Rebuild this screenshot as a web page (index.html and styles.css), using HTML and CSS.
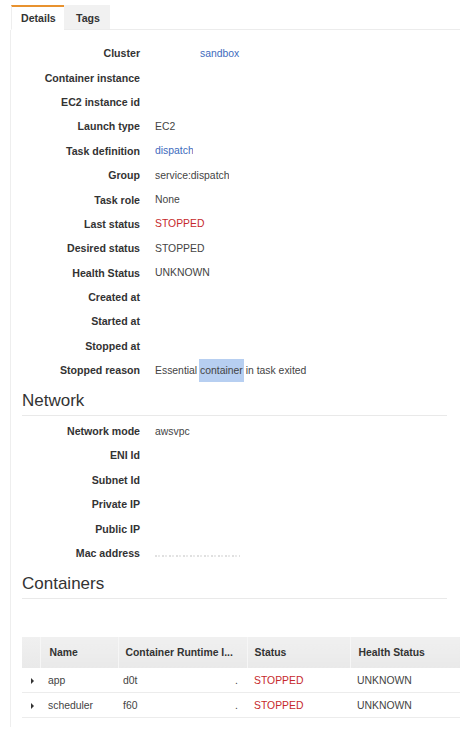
FILE: index.html
```html
<!DOCTYPE html>
<html>
<head>
<meta charset="utf-8">
<link rel="stylesheet" href="styles.css">
</head>
<body>
<div class="tabs">
  <div class="tab active">Details</div>
  <div class="tab">Tags</div>
  <div class="tab-fill"></div>
</div>
<div class="panel">
  <dl class="props">
    <div class="row"><dt>Cluster</dt><dd><span class="link indent">sandbox</span></dd></div>
    <div class="row"><dt>Container instance</dt><dd></dd></div>
    <div class="row"><dt>EC2 instance id</dt><dd></dd></div>
    <div class="row"><dt>Launch type</dt><dd>EC2</dd></div>
    <div class="row"><dt>Task definition</dt><dd><span class="link clip clip-td">dispatch</span></dd></div>
    <div class="row"><dt>Group</dt><dd><span class="clip clip-gr">service:dispatch</span></dd></div>
    <div class="row"><dt>Task role</dt><dd>None</dd></div>
    <div class="row"><dt>Last status</dt><dd class="red">STOPPED</dd></div>
    <div class="row"><dt>Desired status</dt><dd>STOPPED</dd></div>
    <div class="row"><dt>Health Status</dt><dd>UNKNOWN</dd></div>
    <div class="row"><dt>Created at</dt><dd></dd></div>
    <div class="row"><dt>Started at</dt><dd></dd></div>
    <div class="row"><dt>Stopped at</dt><dd></dd></div>
    <div class="row"><dt>Stopped reason</dt><dd>Essential <span class="hl">container</span> in task exited</dd></div>
  </dl>
  <h2 class="section section-net">Network</h2>
  <dl class="props props-net">
    <div class="row"><dt>Network mode</dt><dd>awsvpc</dd></div>
    <div class="row"><dt>ENI Id</dt><dd></dd></div>
    <div class="row"><dt>Subnet Id</dt><dd></dd></div>
    <div class="row"><dt>Private IP</dt><dd></dd></div>
    <div class="row"><dt>Public IP</dt><dd></dd></div>
    <div class="row"><dt>Mac address</dt><dd><span class="blur"></span></dd></div>
  </dl>
  <h2 class="section section-cont">Containers</h2>
  <table class="grid">
    <colgroup>
      <col class="w-exp">
      <col class="w-name">
      <col class="w-rt">
      <col class="w-st">
      <col>
    </colgroup>
    <thead>
      <tr>
        <th class="c-exp"></th>
        <th class="c-name">Name</th>
        <th class="c-rt">Container Runtime I...</th>
        <th class="c-st">Status</th>
        <th class="c-hs">Health Status</th>
      </tr>
    </thead>
    <tbody>
      <tr>
        <td class="c-exp"><span class="tri"></span></td>
        <td class="c-name">app</td>
        <td class="c-rt"><div class="rt"><span>d0t</span><span>.</span></div></td>
        <td class="c-st red">STOPPED</td>
        <td class="c-hs">UNKNOWN</td>
      </tr>
      <tr>
        <td class="c-exp"><span class="tri"></span></td>
        <td class="c-name">scheduler</td>
        <td class="c-rt"><div class="rt"><span>f60</span><span>.</span></div></td>
        <td class="c-st red">STOPPED</td>
        <td class="c-hs">UNKNOWN</td>
      </tr>
    </tbody>
  </table>
</div>
</body>
</html>
```
FILE: styles.css
```css
html, body {
  margin: 0;
  padding: 0;
  background: #ffffff;
}
body {
  font-family: "Liberation Sans", Arial, Helvetica, sans-serif;
  color: #444;
  width: 474px;
  height: 740px;
  overflow: hidden;
}
.tabs {
  display: flex;
  margin-top: 5px;
  padding-left: 11px;
  padding-right: 14px;
  height: 25px;
}
.tab {
  font-size: 10.6px;
  font-weight: bold;
  color: #333;
  line-height: 23px;
  box-sizing: border-box;
  height: 25px;
  border-bottom: 1px solid #ececec;
}
.tab.active {
  width: 53px;
  padding-left: 9px;
  border-top: 2px solid #e8922f;
  border-left: 1px solid #eeeeee;
  border-bottom: 1px solid #ffffff;
  background: #fff;
}
.tab:not(.active) {
  width: 46px;
  padding-left: 12px;
  padding-top: 2px;
  background: #f1f1f1;
}
.tab-fill {
  flex: 1;
  border-bottom: 1px solid #ececec;
}
.panel {
  margin-left: 10px;
  border-left: 1px solid #eeeeee;
  padding-top: 11px;
  padding-bottom: 9px;
  width: 450px;
}
.props {
  margin: 0;
}
.row {
  display: grid;
  grid-template-columns: 129px 1fr;
  column-gap: 15px;
  height: 24.4px;
  align-items: center;
}
dt {
  text-align: right;
  font-weight: bold;
  font-size: 10.6px;
  color: #333;
}
dd {
  margin: 0;
  font-size: 10.4px;
  color: #444;
  white-space: nowrap;
}
.link {
  color: #3e6bbd;
}
.indent {
  padding-left: 45px;
}
.clip {
  display: inline-block;
  overflow: hidden;
  vertical-align: bottom;
}
.clip-td { width: 38px; }
.clip-gr { width: 74px; }
.red {
  color: #c6282c;
}
.hl {
  background: #b7cff1;
  padding: 6px 1px 6px 1px;
  margin: 0 -1px;
}
.blur {
  display: inline-block;
  width: 85px;
  height: 2px;
  margin-top: 6px;
  background: repeating-linear-gradient(90deg, #d8d8d8 0 2px, transparent 2px 3px, #e4e4e4 3px 5px, transparent 5px 7px);
  opacity: 0.8;
}
.section {
  font-weight: normal;
  font-size: 17px;
  line-height: 20px;
  color: #333;
  margin: 0 14px 0 11px;
  padding-bottom: 4px;
  border-bottom: 1px solid #e9e9e9;
}
.section-net {
  margin-top: 9px;
  margin-bottom: 2.4px;
}
.section-cont {
  margin-top: 8.6px;
  margin-bottom: 38px;
}
.grid {
  margin-left: 11px;
  width: 438px;
  border-collapse: collapse;
  table-layout: fixed;
  font-size: 10.4px;
}
.w-exp { width: 18px; }
.w-name { width: 78px; }
.w-rt { width: 129px; }
.w-st { width: 103px; }
.grid th, .grid td {
  box-sizing: border-box;
  white-space: nowrap;
  overflow: hidden;
}
.grid th {
  height: 31px;
  padding: 0 0 0 7px;
  text-align: left;
  font-weight: bold;
  color: #333;
  background: linear-gradient(#f0f0f0, #e9e9e9);
  border-left: 1px solid #f6f6f6;
}
.grid th.c-exp { border-left: none; }
.grid th.c-name { padding-left: 9px; }
.grid th.c-rt { padding-left: 7px; }
.grid th.c-st { padding-left: 7px; }
.grid th.c-hs { padding-left: 8px; }
.grid td {
  height: 25px;
  padding: 0 0 0 7px;
  color: #444;
  border-bottom: 1px solid #ececec;
}
.grid td.c-exp { padding-left: 9px; }
.grid td.c-name { padding-left: 8px; }
.grid td.c-rt { padding-left: 5px; }
.grid td.c-st { padding-left: 7px; }
.grid td.c-hs { padding-left: 7px; }
.grid td.red { color: #c6282c; }
.tri {
  display: inline-block;
  width: 0;
  height: 0;
  border-top: 3px solid transparent;
  border-bottom: 3px solid transparent;
  border-left: 3px solid #333;
  vertical-align: middle;
}
.rt {
  display: flex;
  justify-content: space-between;
  padding-right: 9px;
}
```
